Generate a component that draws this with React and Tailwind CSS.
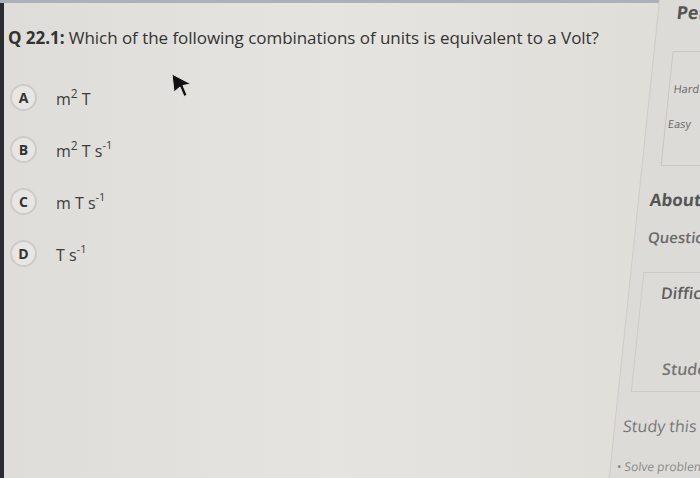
import React from "react";

const sup2 = <sup className="text-[12px] -top-[7px]">2</sup>;
const supm1 = <sup className="text-[11px] -top-[8px]">-1</sup>;

const options = [
  { l: "A", t: <>m{sup2} T</> },
  { l: "B", t: <>m{sup2} T s{supm1}</> },
  { l: "C", t: <>m T s{supm1}</> },
  { l: "D", t: <>T s{supm1}</> },
];

export default function App() {
  return (
    <div
      className="w-[700px] h-[478px] overflow-hidden flex flex-col bg-[#e2e0dc] text-[#363636]"
      style={{ fontFamily: '"Open Sans", "Noto Sans", sans-serif' }}
    >
      <div className="h-[3px] bg-[#aab1bb]" />
      <div className="flex flex-1 min-h-0">
        <div className="w-[4px] bg-[#2c2c33]" />
        <div className="relative flex-1 flex flex-col bg-gradient-to-r from-[#dfddd9] via-[#e6e4e0] to-[#e0ded9] pl-[4px]">
          <div className="pt-[22px] text-[17px] tracking-[-0.05px] text-[#333]">
            <span className="font-bold">Q 22.1:</span> Which of the following combinations of units is equivalent to a Volt?
          </div>
          <div className="flex flex-col gap-[26px] mt-[34px] pl-[2px]">
            {options.map((o) => (
              <div key={o.l} className="flex items-center h-[26px]">
                <div className="w-[27px] h-[27px] rounded-full border-2 border-[#cdcbc7] bg-[#e8e6e2] flex items-center justify-center text-[14px] font-bold text-[#333]">
                  {o.l}
                </div>
                <div className="ml-[19px] text-[16px] text-[#3c3c3c] leading-none pt-[2px]">{o.t}</div>
              </div>
            ))}
          </div>
          <svg className="absolute left-[162px] top-[66px]" width="30" height="32" viewBox="0 0 30 32">
            <path d="M6 5 L25 15 L17 16.5 L21 26 L18 27.5 L14 18 L8 23 Z" fill="#111" stroke="#e5e3df" strokeWidth="1" />
          </svg>
        </div>
        <div className="w-[41px] relative">
          <div className="absolute -top-[3px] bottom-0 left-0 w-[120px] origin-top -skew-x-[6deg] border-l border-[#cfccc8] bg-[#dddbd7] text-[#5a5a5a] whitespace-nowrap">
            <div className="pl-[18px] pt-[1px] text-[18px] font-bold text-[#555] leading-[22px]">Performance</div>
            <div className="ml-[18px] mt-[28px] h-[115px] border border-[#c9c7c3] pl-[4px] text-[11px] text-[#666] leading-[14px]">
              <div className="pt-[30px]">Hard</div>
              <div className="pt-[21px] -ml-[2px]">Easy</div>
            </div>
            <div className="pl-[11px] mt-[24px] text-[17px] font-bold text-[#555] leading-[20px]">About</div>
            <div className="pl-[13px] mt-[17px] text-[15px] font-semibold text-[#6a6a6a] leading-[20px]">Question</div>
            <div className="ml-[12px] mt-[25px] h-[120px] border border-[#cdcbc7] pl-[19px] text-[16px] font-semibold text-[#5e5e5e] leading-[20px]">
              <div className="pt-[10px]">Difficulty</div>
              <div className="pt-[56px] ml-[9px] text-[#767676]">Students</div>
            </div>
            <div className="pl-[8px] mt-[24px] text-[16px] text-[#777] leading-[20px]">Study this</div>
            <div className="pl-[6px] mt-[24px] text-[12px] text-[#8a8a8a] leading-[14px]">• Solve problems</div>
          </div>
        </div>
      </div>
    </div>
  );
}
